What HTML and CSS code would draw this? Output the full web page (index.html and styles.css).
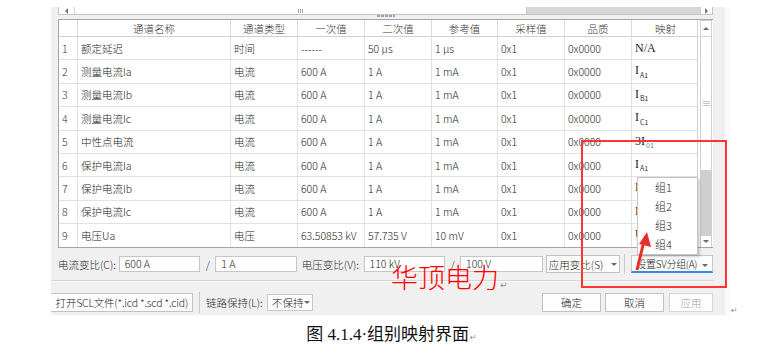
FILE: index.html
```html
<!DOCTYPE html>
<html>
<head>
<meta charset="utf-8">
<title>组别映射界面</title>
<link rel="stylesheet" href="styles.css">
</head>
<body>
<div class="page">
	<div class="shot">
		<div class="dlg">
			<div class="hscroll">
				<span class="hs-arrow hs-left"><i class="tri tri-l"></i></span>
				<span class="hs-thumb"><i class="grip-v"></i></span>
				<span class="hs-track"></span>
				<span class="hs-arrow hs-right"><i class="tri tri-r"></i></span>
			</div>
			<div class="splitter"><i class="grip-split"></i></div>
			<div class="grid">
				<div class="grid-body">
					<table class="chan">
						<colgroup>
							<col style="width:19px"><col style="width:153px"><col style="width:67px"><col style="width:67px"><col style="width:67px"><col style="width:66px"><col style="width:67px"><col style="width:67px"><col style="width:68px">
						</colgroup>
						<thead>
							<tr><th></th><th>通道名称</th><th>通道类型</th><th>一次值</th><th>二次值</th><th>参考值</th><th>采样值</th><th>品质</th><th>映射</th></tr>
						</thead>
						<tbody>
							<tr><td class="num">1</td><td>额定延迟</td><td>时间</td><td>------</td><td>50 μs</td><td>1 μs</td><td>0x1</td><td>0x0000</td><td class="map">N/A</td></tr>
							<tr><td class="num">2</td><td>测量电流Ia</td><td>电流</td><td>600 A</td><td>1 A</td><td>1 mA</td><td>0x1</td><td>0x0000</td><td class="map">I<sub>A1</sub></td></tr>
							<tr><td class="num">3</td><td>测量电流Ib</td><td>电流</td><td>600 A</td><td>1 A</td><td>1 mA</td><td>0x1</td><td>0x0000</td><td class="map">I<sub>B1</sub></td></tr>
							<tr><td class="num">4</td><td>测量电流Ic</td><td>电流</td><td>600 A</td><td>1 A</td><td>1 mA</td><td>0x1</td><td>0x0000</td><td class="map">I<sub>C1</sub></td></tr>
							<tr><td class="num">5</td><td>中性点电流</td><td>电流</td><td>600 A</td><td>1 A</td><td>1 mA</td><td>0x1</td><td>0x0000</td><td class="map">3I<sub class="blue">01</sub></td></tr>
							<tr><td class="num">6</td><td>保护电流Ia</td><td>电流</td><td>600 A</td><td>1 A</td><td>1 mA</td><td>0x1</td><td>0x0000</td><td class="map">I<sub>A1</sub></td></tr>
							<tr><td class="num">7</td><td>保护电流Ib</td><td>电流</td><td>600 A</td><td>1 A</td><td>1 mA</td><td>0x1</td><td>0x0000</td><td class="map">I<sub>B1</sub></td></tr>
							<tr><td class="num">8</td><td>保护电流Ic</td><td>电流</td><td>600 A</td><td>1 A</td><td>1 mA</td><td>0x1</td><td>0x0000</td><td class="map">I<sub>C1</sub></td></tr>
							<tr><td class="num">9</td><td>电压Ua</td><td>电压</td><td>63.50853 kV</td><td>57.735 V</td><td>10 mV</td><td>0x1</td><td>0x0000</td><td class="map">U<sub>A1</sub></td></tr>
						</tbody>
					</table>
				</div>
				<div class="vscroll">
					<span class="vs-arrow vs-up"><i class="tri tri-u"></i></span>
					<span class="vs-thumb"><i class="grip-h"></i></span>
					<span class="vs-track"></span>
					<span class="vs-arrow vs-down"><i class="tri tri-d"></i></span>
				</div>
			</div>
			<div class="ratio-row">
				<span class="lbl lbl-c">电流变比(C):</span>
				<span class="field">600 A</span>
				<span class="slash">/</span>
				<span class="field">1 A</span>
				<span class="lbl lbl-v">电压变比(V):</span>
				<span class="field">110 kV</span>
				<span class="slash">/</span>
				<span class="field f-wide">100 V</span>
				<span class="btn btn-apply">应用变比(S)<i class="tri tri-d"></i></span>
				<span class="vsep"></span>
				<span class="combo combo-sv">设置SV分组(A)<i class="tri tri-d"></i></span>
			</div>
			<div class="divider"></div>
			<div class="btn-row">
				<span class="btn btn-open">打开SCL文件(*.icd *.scd *.cid)</span>
				<span class="vsep"></span>
				<span class="lbl lbl-l">链路保持(L):</span>
				<span class="combo combo-keep">不保持<i class="tri tri-d"></i></span>
				<span class="spacer"></span>
				<span class="btn btn-ok">确定</span>
				<span class="btn btn-cancel">取消</span>
				<span class="btn btn-off">应用</span>
			</div>
		</div>
		<span class="ret">↵</span>
	</div>
	<p class="caption">图 4.1.4·组别映射界面<span class="ret">↵</span></p>

	<!-- annotations drawn over the screenshot -->
	<div class="mark-box"></div>
	<ul class="popup">
		<li>组1</li>
		<li>组2</li>
		<li>组3</li>
		<li>组4</li>
	</ul>
	<svg class="mark-arrow" width="30" height="46" viewBox="0 0 30 46">
		<line x1="7" y1="42" x2="14" y2="13" stroke="#e8302a" stroke-width="3"/>
		<polygon points="17,4 21,19 9,16" fill="#e8302a"/>
	</svg>
	<div class="watermark">华顶电力<span class="ret">↵</span></div>
</div>
</body>
</html>
```

FILE: styles.css
```css
* {
	box-sizing: border-box;
}
body {
	margin: 0;
	background: #fff;
	font-family: "Noto Sans CJK SC", sans-serif;
	color: #1e1e1e;
}
.page {
	position: relative;
	width: 761px;
	height: 353px;
}
.shot {
	display: flex;
	align-items: flex-end;
	padding: 7px 0 0 51px;
}
.dlg {
	width: 679px;
	height: 308px;
	background: #f0f0f0;
	padding: 0 12px 0 7px;
	display: flex;
	flex-direction: column;
	overflow: hidden;
	border-right: 5px solid #fafafa;
	font-size: 10.5px;
	font-weight: 300;
	color: #222;
}

/* horizontal scrollbar of the upper view, top cropped */
.hscroll {
	height: 8px;
	display: flex;
	border: 1px solid #c4c4c4;
	border-top: 0;
	background: #fff;
}
.hs-arrow {
	display: flex;
	align-items: center;
	justify-content: center;
	background: #fff;
}
.hs-left {
	width: 16px;
	border-right: 1px solid #d2d2d2;
}
.hs-right {
	width: 12px;
	border-left: 1px solid #d2d2d2;
}
.hs-thumb {
	width: 452px;
	display: flex;
	justify-content: center;
	align-items: center;
	border-right: 1px solid #c8c8c8;
}
.hs-track {
	flex: 1;
	background: #d6d6d9;
}
.grip-v {
	width: 5px;
	height: 4px;
	background: repeating-linear-gradient(90deg, #a8a8a8 0 1px, transparent 1px 2px);
}
.splitter {
	height: 4px;
	display: flex;
	justify-content: center;
}
.grip-split {
	width: 18px;
	height: 2px;
	background: repeating-linear-gradient(90deg, #8fa3c0 0 3px, transparent 3px 4px);
}

.tri {
	display: inline-block;
	width: 0;
	height: 0;
	border: 3px solid transparent;
}
.tri-l {
	border-right-color: #777;
	border-left-width: 0;
}
.tri-r {
	border-left-color: #777;
	border-right-width: 0;
}
.tri-u {
	border-bottom-color: #6b6b6b;
	border-top-width: 0;
}
.tri-d {
	border-top-color: #6b6b6b;
	border-bottom-width: 0;
}

/* channel table */
.grid {
	height: 229px;
	display: flex;
	border: 1px solid #a5a5a5;
	border-right: 0;
	background: #fff;
}
.grid-body {
	flex: 1;
	overflow: hidden;
}
.chan {
	table-layout: fixed;
	width: 641px;
	border-collapse: separate;
	border-spacing: 0;
}
.chan th {
	height: 17px;
	padding: 0;
	font-weight: 300;
	color: #3a3a3a;
	text-align: center;
	border-right: 1px solid #dadada;
	border-bottom: 1px solid #d0d0d0;
}
.chan td {
	height: 23.4px;
	padding: 0 0 0 3px;
	white-space: nowrap;
	overflow: hidden;
	border-right: 1px solid #e2e2e2;
	border-bottom: 1px solid #e2e2e2;
}
.chan td.num {
	color: #333;
	padding-left: 3px;
}
.chan .map {
	font-family: "Liberation Serif", "Noto Sans CJK SC", serif;
	font-weight: normal;
	font-size: 12px;
}
.chan sub {
	font-family: "Noto Sans CJK SC", sans-serif;
	font-size: 7px;
	margin-left: 1px;
	color: #2e2e3a;
}
.chan sub.blue {
	color: #5b7bb0;
}
.vscroll {
	width: 16px;
	display: flex;
	flex-direction: column;
	border-left: 1px solid #d2d2d2;
	padding: 0 1px 0 2px;
}
.vs-arrow {
	display: flex;
	align-items: center;
	justify-content: center;
	border: 1px solid #d0d0d0;
	background: #fff;
}
.vs-up {
	height: 17px;
}
.vs-down {
	height: 12px;
	border-bottom: 0;
}
.vs-thumb {
	height: 134px;
	display: flex;
	align-items: center;
	justify-content: center;
	border: 1px solid #d0d0d0;
	border-top: 0;
}
.grip-h {
	width: 7px;
	height: 5px;
	background: repeating-linear-gradient(180deg, #c4c4c4 0 1px, transparent 1px 2px);
}
.vs-track {
	flex: 1;
	background: #cfcfd2;
}

/* ratio row */
.ratio-row {
	height: 32px;
	display: flex;
	align-items: center;
}
.lbl {
	color: #2a2a2a;
	white-space: nowrap;
}
.lbl-c {
	width: 61px;
}
.lbl-v {
	width: 62px;
	margin-left: 5px;
}
.field {
	width: 82px;
	height: 16px;
	line-height: 14px;
	padding-left: 5px;
	background: #fff;
	border: 1px solid #c6c6c6;
	color: #222;
}
.f-wide {
	width: 83px;
}
.slash {
	width: 15px;
	text-align: center;
}
.btn {
	height: 18px;
	display: flex;
	align-items: center;
	justify-content: center;
	gap: 8px;
	background: #fdfdfd;
	border: 1px solid #c2c2c2;
	color: #1e1e1e;
	white-space: nowrap;
}
.btn-apply {
	width: 75px;
	margin-left: 3px;
}
.vsep {
	width: 1px;
	height: 20px;
	background: #c8c8c8;
	margin: 0 6px 0 4px;
}
.combo {
	height: 18px;
	display: flex;
	align-items: center;
	justify-content: space-between;
	padding: 0 4px 0 5px;
	background: #fdfdfd;
	border: 1px solid #c8c8c8;
	white-space: nowrap;
}
.combo-sv {
	width: 82px;
	border-bottom: 2px solid #3c8bd9;
	padding-left: 4px;
	font-size: 10px;
	letter-spacing: -0.3px;
}
.combo-sv .tri {
	margin-top: 4px;
}
.divider {
	height: 2px;
	border-top: 1px solid #d6d6d6;
	border-bottom: 1px solid #fafafa;
	margin-left: -7px;
}

/* bottom buttons */
.btn-row {
	height: 33px;
	display: flex;
	align-items: center;
	padding-top: 8px;
}
.btn-row .btn {
	height: 19px;
}
.btn-open {
	width: 149px;
	margin-left: -14px;
	justify-content: flex-end;
	padding-right: 4px;
	letter-spacing: -0.2px;
}
.btn-row .vsep {
	height: 21px;
	margin: 0 6px;
}
.lbl-l {
	width: 61px;
}
.combo-keep {
	width: 46px;
	height: 17px;
	padding-left: 4px;
}
.spacer {
	flex: 1;
}
.btn-ok,
.btn-cancel {
	width: 59px;
}
.btn-cancel {
	margin-left: 4px;
}
.btn-off {
	width: 44px;
	margin-left: 5px;
	color: #a3a3a3;
	border-color: #d6d6d6;
}

.ret {
	font-family: "DejaVu Sans", sans-serif;
	font-weight: normal;
	font-size: 8px;
	color: #8a8a8a;
	margin-left: 1px;
	line-height: 1;
}
.caption {
	margin: 10px 0 0;
	padding-left: 22px;
	text-align: center;
	font-family: "Liberation Serif", "Noto Sans CJK SC", serif;
	font-size: 17px;
	line-height: 20px;
	color: #111;
}

/* red annotations */
.mark-box {
	position: absolute;
	left: 581px;
	top: 140px;
	width: 146px;
	height: 148px;
	border: 2px solid #ff3535;
}
.popup {
	position: absolute;
	left: 637px;
	top: 177px;
	width: 61px;
	height: 78px;
	margin: 0;
	padding: 0;
	list-style: none;
	background: #fff;
	border: 1px solid #c4c4c4;
	box-shadow: 2px 2px 2px rgba(0, 0, 0, 0.18);
	font-size: 11px;
	font-weight: 300;
}
.popup li {
	height: 19px;
	line-height: 19px;
	padding-left: 17px;
}
.mark-arrow {
	position: absolute;
	left: 630px;
	top: 228px;
}
.watermark {
	position: absolute;
	left: 391px;
	top: 261px;
	font-size: 27px;
	font-weight: 300;
	line-height: 31px;
	color: #ff0000;
}
.watermark .ret {
	font-size: 9px;
}
```
